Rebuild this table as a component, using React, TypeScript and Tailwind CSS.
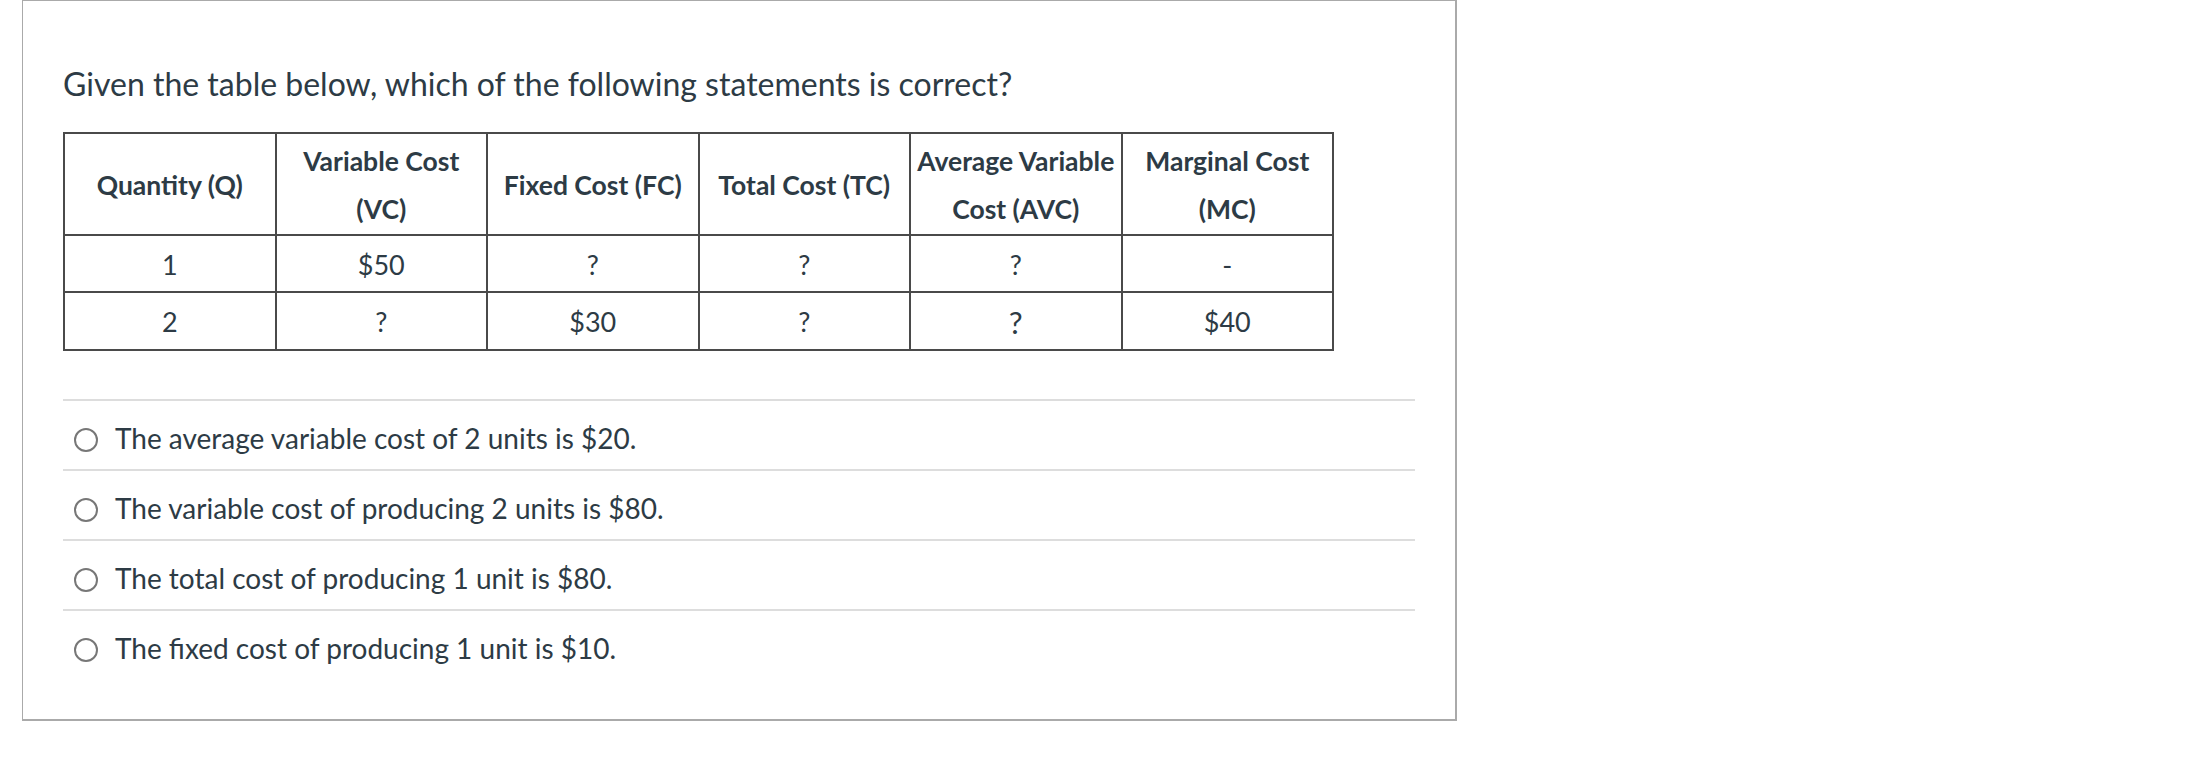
import React from "react";

const headers: string[][] = [
  ["Quantity (Q)"],
  ["Variable Cost", "(VC)"],
  ["Fixed Cost (FC)"],
  ["Total Cost (TC)"],
  ["Average Variable", "Cost (AVC)"],
  ["Marginal Cost", "(MC)"],
];

const rows: string[][] = [
  ["1", "$50", "?", "?", "?", "-"],
  ["2", "?", "$30", "?", "?", "$40"],
];

const answers = [
  "The average variable cost of 2 units is $20.",
  "The variable cost of producing 2 units is $80.",
  "The total cost of producing 1 unit is $80.",
  "The fixed cost of producing 1 unit is $10.",
];

export default function App() {
  return (
    <div
      className="min-h-[758px] w-[2197px] bg-white pl-[22px] text-[#2d3b45]"
      style={{ fontFamily: "Lato, 'Noto Sans', sans-serif" }}
    >
      <div className="w-[1435px] h-[721px] border-l border-t border-r-2 border-b-2 border-[#aaaaaa] pt-[62px] pl-[40px] pr-[40px]">
        <p className="text-[32px] leading-[42px]">
          Given the table below, which of the following statements is correct?
        </p>
        <table className="mt-[27px] w-[1271px] table-fixed border-collapse border-2 border-[#4a4a4a]">
          <thead>
            <tr className="h-[102px]">
              {headers.map((h, i) => (
                <th
                  key={i}
                  className={
                    h.length > 1
                      ? "border-2 border-[#4a4a4a] px-0 pt-[2px] text-center align-middle text-[26.5px] font-bold leading-[48px] whitespace-nowrap"
                      : "border-2 border-[#4a4a4a] px-0 pt-[1px] text-center align-middle text-[26.5px] font-bold leading-[48px] whitespace-nowrap"
                  }
                >
                  {h.map((line, j) => (
                    <div key={j}>{line}</div>
                  ))}
                </th>
              ))}
            </tr>
          </thead>
          <tbody>
            {rows.map((r, i) => (
              <tr key={i} className={i === 0 ? "h-[57px]" : "h-[58px]"}>
                {r.map((c, j) => (
                  <td
                    key={j}
                    className={
                      i === 1 && j === 4
                        ? "border-2 border-[#4a4a4a] pt-[2px] text-center align-middle text-[31px] leading-[36px]"
                        : "border-2 border-[#4a4a4a] pt-[2px] text-center align-middle text-[27px] leading-[36px]"
                    }
                  >
                    {c}
                  </td>
                ))}
              </tr>
            ))}
          </tbody>
        </table>
        <div className="mt-[48px] w-[1352px]">
          {answers.map((a, i) => (
            <div
              key={i}
              className="flex h-[70px] items-center border-t-2 border-[#dddddd] pl-[11px]"
            >
              <span className="mt-[10px] box-border h-[24px] w-[24px] shrink-0 rounded-full border-2 border-[#777777] bg-white" />
              <span className="ml-[17px] mt-[5px] text-[28px] leading-[36px]">{a}</span>
            </div>
          ))}
        </div>
      </div>
    </div>
  );
}
